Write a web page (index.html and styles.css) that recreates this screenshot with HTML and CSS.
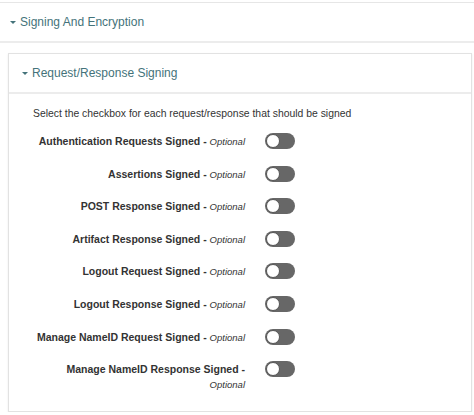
FILE: index.html
```html
<!DOCTYPE html>
<html>
<head>
    <title>Signing And Encryption</title>
    <link rel="stylesheet" href="styles.css">
</head>
<body>
    <div class="panel outer">
        <div class="panel-heading"><span class="caret"></span>Signing And Encryption</div>
        <div class="panel-body">
            <div class="panel inner">
                <div class="panel-heading"><span class="caret"></span>Request/Response Signing</div>
                <div class="panel-body signing">
                    <p class="intro">Select the checkbox for each request/response that should be signed</p>
                    <div class="row">
                        <label>Authentication Requests Signed - <em>Optional</em></label>
                        <span class="toggle"></span>
                    </div>
                    <div class="row">
                        <label>Assertions Signed - <em>Optional</em></label>
                        <span class="toggle"></span>
                    </div>
                    <div class="row">
                        <label>POST Response Signed - <em>Optional</em></label>
                        <span class="toggle"></span>
                    </div>
                    <div class="row">
                        <label>Artifact Response Signed - <em>Optional</em></label>
                        <span class="toggle"></span>
                    </div>
                    <div class="row">
                        <label>Logout Request Signed - <em>Optional</em></label>
                        <span class="toggle"></span>
                    </div>
                    <div class="row">
                        <label>Logout Response Signed - <em>Optional</em></label>
                        <span class="toggle"></span>
                    </div>
                    <div class="row">
                        <label>Manage NameID Request Signed - <em>Optional</em></label>
                        <span class="toggle"></span>
                    </div>
                    <div class="row">
                        <label>Manage NameID Response Signed - <em>Optional</em></label>
                        <span class="toggle"></span>
                    </div>
                </div>
            </div>
        </div>
    </div>
</body>
</html>
```

FILE: styles.css
```css
body {
    font-family: 'Liberation Sans', Arial, sans-serif;
    background-color: #fff;
    margin: 0;
    color: #333;
}
.panel {
    background-color: #fff;
}
.outer {
    margin-top: 2px;
    border-top: 1px solid #e6e6e6;
}
.panel-heading {
    display: flex;
    align-items: center;
    height: 38px;
    padding-left: 10px;
    font-size: 12px;
    color: #44737a;
    border-bottom: 2px solid #ececec;
}
.caret {
    width: 0;
    height: 0;
    border-left: 3px solid transparent;
    border-right: 3px solid transparent;
    border-top: 3px solid #44737a;
    margin-right: 4px;
}
.outer > .panel-body {
    padding: 10px 2px 0 8px;
}
.inner {
    border: 1px solid #e2e2e2;
    box-shadow: 0 1px 2px rgba(0, 0, 0, 0.08);
    height: 359px;
    box-sizing: border-box;
}
.inner .panel-heading {
    height: 38px;
    padding-left: 13px;
}
.signing {
    padding: 14px 0 0 24px;
}
.intro {
    margin: 0 0 13px;
    font-size: 10.4px;
    line-height: 12px;
}
.row {
    display: flex;
    align-items: flex-start;
    margin-bottom: 16.6px;
}
.row label {
    width: 212px;
    text-align: right;
    font-size: 10.5px;
    font-weight: bold;
    line-height: 15px;
    padding-top: 1px;
}
.row em {
    font-weight: normal;
    font-size: 9.5px;
}
.toggle {
    position: relative;
    display: block;
    width: 30px;
    height: 16px;
    border-radius: 8px;
    background-color: #676767;
    margin-left: 20px;
}
.toggle::before {
    content: "";
    position: absolute;
    left: 1px;
    top: 1px;
    width: 12px;
    height: 12px;
    border-radius: 50%;
    background-color: #fff;
    border: 1px solid #555;
}
```
